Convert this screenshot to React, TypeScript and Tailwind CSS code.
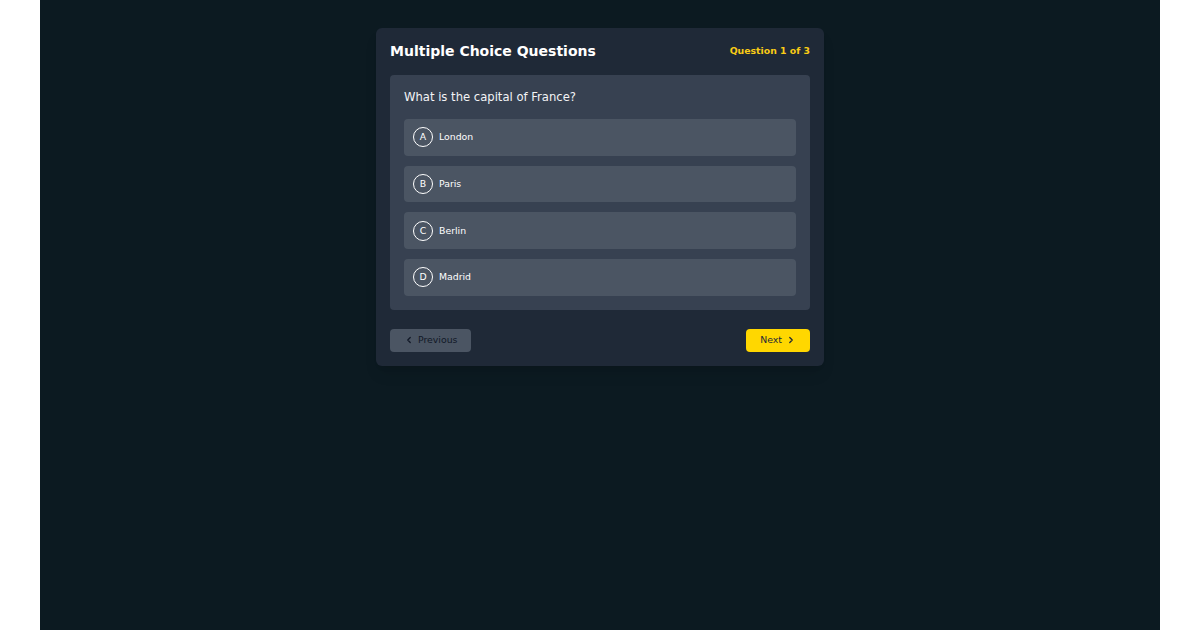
import { ChevronLeft, ChevronRight } from "lucide-react";

const options = [
  { key: "A", label: "London" },
  { key: "B", label: "Paris" },
  { key: "C", label: "Berlin" },
  { key: "D", label: "Madrid" },
];

export default function App() {
  return (
    <div
      className="min-h-screen bg-white"
      style={{ fontFamily: '"DejaVu Sans", sans-serif' }}
    >
      <main className="mx-auto min-h-screen max-w-[1120px] bg-[#0c1a21] pt-7">
        <section className="mx-auto w-[448px] rounded-md bg-[#1f2937] p-3.5 shadow-lg">
          <header className="mb-[15px] flex items-center justify-between">
            <h1 className="text-sm leading-[18px] font-bold text-white">Multiple Choice Questions</h1>
            <span className="text-[9.33px] font-bold text-[#facc15]">Question 1 of 3</span>
          </header>

          <div className="rounded bg-[#374151] p-3.5">
            <p className="mb-3.5 text-[11.6px] leading-4 text-gray-100">What is the capital of France?</p>
            <div className="flex flex-col gap-2.5">
              {options.map((option) => (
                <button
                  key={option.key}
                  className="flex h-[36.7px] items-center gap-[6px] rounded bg-[#4b5563] px-[9px] text-left"
                >
                  <span className="flex h-5 w-5 items-center justify-center rounded-full border border-white text-[9.33px] text-white">
                    {option.key}
                  </span>
                  <span className="text-[9.33px] text-white">{option.label}</span>
                </button>
              ))}
            </div>
          </div>

          <footer className="mt-[19px] flex items-center justify-between">
            <button className="flex h-[23px] items-center gap-1 rounded bg-[#4b5563] px-3.5 text-[9.33px] text-[#111827]">
              <ChevronLeft className="h-2.5 w-2.5" strokeWidth={3} />
              Previous
            </button>
            <button className="flex h-[23px] items-center gap-1 rounded bg-[#ffd700] px-3.5 text-[9.33px] text-[#1f2937]">
              Next
              <ChevronRight className="h-2.5 w-2.5" strokeWidth={3} />
            </button>
          </footer>
        </section>
      </main>
    </div>
  );
}
